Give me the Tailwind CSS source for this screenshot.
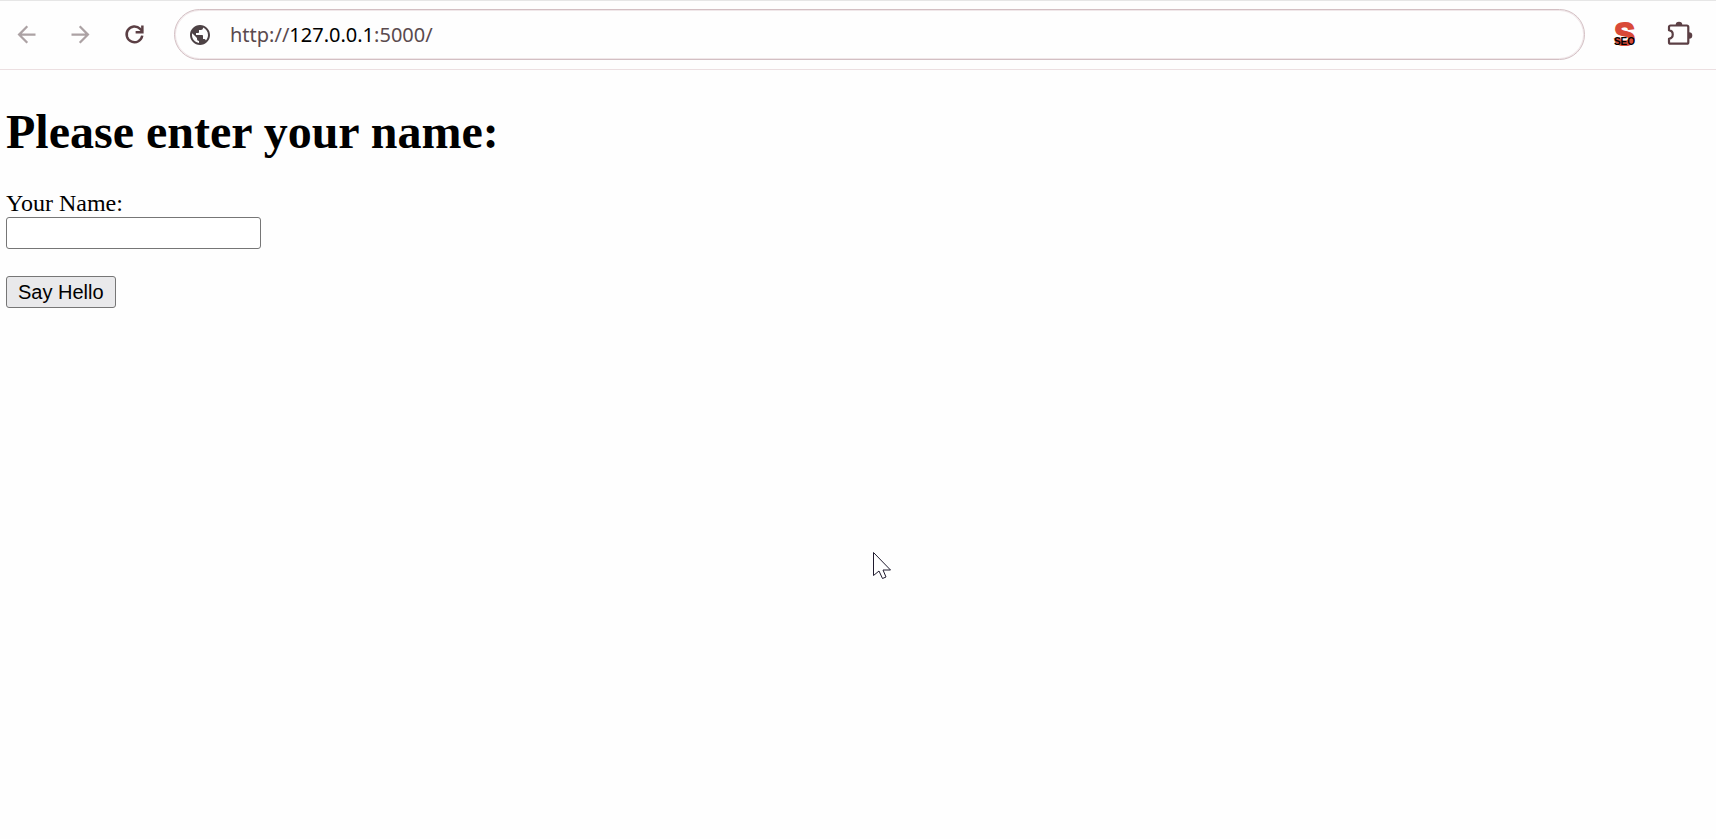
<!DOCTYPE html>
<html lang="en">
<head>
    <meta charset="UTF-8">
    <meta name="viewport" content="width=device-width, initial-scale=1.0">
    <title>Say Hello</title>
    <script src="https://cdn.jsdelivr.net/npm/@tailwindcss/browser@4"></script>
</head>
<body class="min-h-screen bg-[#fefefe] text-black font-['Liberation_Serif',serif]">
<!-- Browser toolbar -->
<header class="flex items-center pt-2 pb-[9px] pl-[13px] pr-[23px] border-t border-t-[#e6e6e6] border-b border-b-[#ecdfe1]">
    <nav class="flex items-center gap-[27px] mr-[26px]">
        <button type="button" aria-label="Back" class="text-[#aca2a4]">
            <svg class="block size-[27px]" viewBox="0 0 24 24" fill="currentColor"><path d="M20 11H7.83l5.59-5.59L12 4l-8 8 8 8 1.41-1.41L7.83 13H20v-2z"/></svg>
        </button>
        <button type="button" aria-label="Forward" class="text-[#aca2a4]">
            <svg class="block size-[27px]" viewBox="0 0 24 24" fill="currentColor"><path d="M12 4l-1.41 1.41L16.17 11H4v2h12.17l-5.58 5.59L12 20l8-8z"/></svg>
        </button>
        <button type="button" aria-label="Reload" class="text-[#5b3f44]">
            <svg class="block size-[27px]" viewBox="0 0 24 24" fill="none" stroke="currentColor" stroke-width="2.2"><path d="M18.9 13a7 7 0 1 1-1.9-6l2 2"/><path d="M19 4v5.900h-6"/></svg>
        </button>
    </nav>

    <div class="flex flex-1 items-center gap-[18px] h-[51px] pl-[13px] pr-6 border border-[#d3bfc3] rounded-full ring-1 ring-inset ring-[#f0e7e9]">
        <svg class="block size-6 shrink-0 text-[#4d4245]" viewBox="0 0 24 24" fill="currentColor"><path d="M12 2C6.48 2 2 6.48 2 12s4.48 10 10 10 10-4.48 10-10S17.52 2 12 2zm-1 17.93c-3.95-.49-7-3.85-7-7.93 0-.62.08-1.21.21-1.79L9 15v1c0 1.1.9 2 2 2v1.93zm6.9-2.54c-.26-.81-1-1.39-1.9-1.39h-1v-3c0-.55-.45-1-1-1H8v-2h2c.55 0 1-.45 1-1V7h2c1.1 0 2-.9 2-2v-.41c2.93 1.19 5 4.06 5 7.41 0 2.08-.8 3.97-2.1 5.39z"/></svg>
        <p class="font-['Noto_Sans',sans-serif] text-xl leading-7 text-[#5a4a4e]">http://<span class="text-black">127.0.0.1</span>:5000/</p>
    </div>

    <div class="flex items-center gap-7 ml-[26px]">
        <button type="button" aria-label="SEO" class="relative flex size-[27px] items-center justify-center font-['Liberation_Sans',sans-serif] font-bold">
            <span class="text-[31px] leading-7 text-[#d94a38] [-webkit-text-stroke:2px_#d94a38]">S</span>
            <span class="absolute inset-x-0 bottom-0 text-[10px] leading-3 text-black">SEO</span>
        </button>
        <button type="button" aria-label="Extensions" class="text-[#5b3f44]">
            <svg class="block size-[27px]" viewBox="0 0 27 27" fill="none" stroke="currentColor" stroke-width="2.2" stroke-linejoin="round"><path d="M4.500 4.500h16.300a1.500 1.500 0 0 1 1.500 1.500v15.200a1.500 1.500 0 0 1-1.500 1.500H4.500a1.500 1.500 0 0 1-1.500-1.500v-3.400c5-1 5-7.600 0-8.600V6a1.500 1.500 0 0 1 1.500-1.500z"/><path d="M9.700 4a3.300 3.300 0 0 1 6.600 0zM23 11.200a3.300 3.300 0 0 1 0 6.600z" fill="currentColor" stroke="none"/></svg>
        </button>
    </div>
</header>

<main class="px-[6px] pt-[34px]">
    <h1 class="text-5xl leading-[56px] font-bold mb-[29px]">Please enter your name:</h1>

    <form>
        <label for="name" class="block text-2xl leading-7">Your Name:</label>
        <input type="text" id="name" name="name" class="block w-[255px] h-8 px-1 border border-[#767676] rounded-[3px] bg-white text-xl font-['Liberation_Sans',sans-serif]">
        <button type="submit" class="block mt-[27px] h-8 px-[11px] border border-[#767676] rounded-[3px] bg-[#e9e9eb] text-xl leading-7 font-['Liberation_Sans',sans-serif]">Say Hello</button>
    </form>
</main>

<!-- Mouse pointer -->
<svg class="absolute left-[872px] top-[551px] w-5 h-7" viewBox="0 0 20 28" fill="#fff" stroke="#1f1a2e" stroke-width="1"><path d="M1.500 1.500v23l5.500-4.500 3.500 7.500 3.500-1.500-3-7h7.500z"/></svg>
</body>
</html>
